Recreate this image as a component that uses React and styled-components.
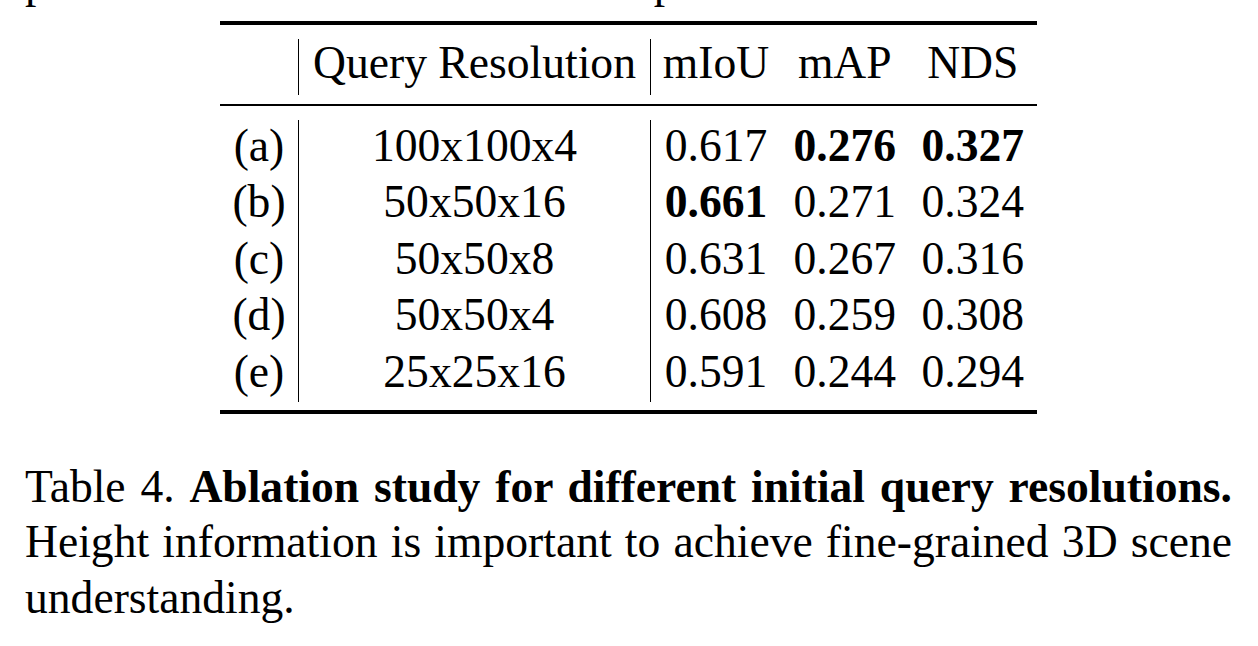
import styled, { createGlobalStyle, css } from "styled-components";

const GlobalStyle = createGlobalStyle`
  html, body {
    margin: 0;
    padding: 0;
    background: #fff;
  }
  body {
    font-family: "Liberation Serif", "Times New Roman", serif;
    color: #000;
    overflow: hidden;
  }
`;

const rows = [
  { label: "(a)", res: "100x100x4", miou: "0.617", map: "0.276", nds: "0.327", bold: ["map", "nds"] },
  { label: "(b)", res: "50x50x16", miou: "0.661", map: "0.271", nds: "0.324", bold: ["miou"] },
  { label: "(c)", res: "50x50x8", miou: "0.631", map: "0.267", nds: "0.316", bold: [] },
  { label: "(d)", res: "50x50x4", miou: "0.608", map: "0.259", nds: "0.308", bold: [] },
  { label: "(e)", res: "25x25x16", miou: "0.591", map: "0.244", nds: "0.294", bold: [] },
];

const Page = styled.div`
  width: 1207px;
  padding: 0 26px 0 25px;
  font-size: 45.6px;
`;

// tail of the paragraph above the table, only its descenders are in view
const PrevLine = styled.div`
  margin-top: -46px;
  height: 55px;
  line-height: 55px;
  white-space: nowrap;
  overflow: hidden;
  word-spacing: -0.7px;
`;

const Table = styled.div`
  width: 817px;
  margin: 12px auto 0;
  display: flex;
  flex-direction: column;
`;

const Rule = styled.div`
  height: ${(p) => p.$size}px;
  background: #000;
  margin-bottom: ${(p) => p.$after || 0}px;
`;

const gridCols = css`
  display: grid;
  grid-template-columns: 78px 352px 131px 127.5px 1fr;
`;

const HeadRow = styled.div`
  ${gridCols};
  height: 56px;
  line-height: 48px;
  margin-bottom: 9px;
`;

const Body = styled.div`
  display: flex;
  flex-direction: column;
  margin-bottom: 8px;
`;

const BodyRow = styled.div`
  ${gridCols};
  height: 56.4px;
  line-height: 51px;
`;

const Cell = styled.div`
  text-align: center;
  white-space: nowrap;
  font-weight: ${(p) => (p.$bold ? 700 : 400)};
  border-left: ${(p) => (p.$divider ? "1.5px solid #000" : "none")};
`;

const Caption = styled.p`
  margin: 45px 0 0;
  line-height: 55.5px;
  text-align: justify;
`;

const Strong = styled.b`
  font-weight: 700;
`;

const App = () => {
  const renderRow = (r) => (
    <BodyRow key={r.label}>
      <Cell>{r.label}</Cell>
      <Cell $divider>{r.res}</Cell>
      <Cell $divider $bold={r.bold.includes("miou")}>{r.miou}</Cell>
      <Cell $bold={r.bold.includes("map")}>{r.map}</Cell>
      <Cell $bold={r.bold.includes("nds")}>{r.nds}</Cell>
    </BodyRow>
  );

  return (
    <>
      <GlobalStyle />
      <Page>
        <PrevLine>
          performance is better when all the parameters are used to define the resolution of the entire 3D scene.
        </PrevLine>
        <Table>
          <Rule $size={4} $after={14} />
          <HeadRow>
            <Cell />
            <Cell $divider>Query Resolution</Cell>
            <Cell $divider>mIoU</Cell>
            <Cell>mAP</Cell>
            <Cell>NDS</Cell>
          </HeadRow>
          <Rule $size={2} $after={14} />
          <Body>{rows.map(renderRow)}</Body>
          <Rule $size={4} />
        </Table>
        <Caption>
          Table 4. <Strong>Ablation study for different initial query resolutions.</Strong>{" "}
          Height information is important to achieve fine-grained 3D scene understanding.
        </Caption>
      </Page>
    </>
  );
};

export default App;
